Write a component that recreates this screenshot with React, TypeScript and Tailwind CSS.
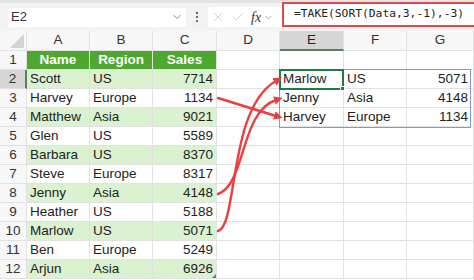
import { Check, ChevronDown, EllipsisVertical, X } from "lucide-react";

const data: [string, string, number][] = [
  ["Scott", "US", 7714],
  ["Harvey", "Europe", 1134],
  ["Matthew", "Asia", 9021],
  ["Glen", "US", 5589],
  ["Barbara", "US", 8370],
  ["Steve", "Europe", 8317],
  ["Jenny", "Asia", 4148],
  ["Heather", "US", 5188],
  ["Marlow", "US", 5071],
  ["Ben", "Europe", 5249],
  ["Arjun", "Asia", 6926],
];

// result of =TAKE(SORT(Data,3,-1),-3)
const spill: [string, string, number][] = [
  ["Marlow", "US", 5071],
  ["Jenny", "Asia", 4148],
  ["Harvey", "Europe", 1134],
];

const cols = ["A", "B", "C", "D", "E", "F", "G"];
const cell = "border-r border-b border-[#e1e1e1] flex items-center overflow-hidden whitespace-nowrap";

function TableCells({ row, idx }: { row: [string, string, number]; idx: number }) {
  const band = idx % 2 === 0 ? "bg-[#daf2d0] border-[#cfe6c5]" : "bg-white border-[#d9ead2]";
  const last = idx === data.length - 1;
  return (
    <>
      <div className={`${cell} ${band} pl-[3px]`}>{row[0]}</div>
      <div className={`${cell} ${band} pl-[3px]`}>{row[1]}</div>
      <div className={`${cell} ${band} justify-end pr-[3px] ${last ? "relative" : ""}`}>
        {row[2]}
        {last && (
          <span className="absolute right-0 bottom-0 w-0 h-0 border-l-[4px] border-l-transparent border-b-[4px] border-b-[#5a7bb8]" />
        )}
      </div>
    </>
  );
}

export default function App() {
  return (
    <div
      className="relative w-[474px] h-[280px] overflow-hidden bg-white text-[13.5px] text-[#222]"
      style={{ fontFamily: '"Liberation Sans", Arial, sans-serif' }}
    >
      {/* formula bar */}
      <div className="h-[31px] bg-[#f3f3f3] border-t-[3px] border-[#e4e4e4] flex items-center">
        <div className="ml-[8px] w-[178px] h-[19px] bg-white rounded-[3px] flex items-center justify-between pl-[3px] pr-[3px] text-[13px] text-[#333]">
          E2
          <ChevronDown size={12} strokeWidth={1.5} className="text-[#555]" />
        </div>
        <EllipsisVertical size={14} strokeWidth={2} className="ml-[4px] text-[#666]" />
        <div className="ml-[4px] w-[74px] h-[20px] bg-white rounded-l-[3px] flex items-center pl-[3px] gap-[6px] text-[#bbb]">
          <X size={14} strokeWidth={1.2} />
          <Check size={14} strokeWidth={1.2} />
          <span
            className="text-[#333] italic text-[14px]"
            style={{ fontFamily: '"Liberation Serif", serif' }}
          >
            fx
          </span>
          <ChevronDown size={11} strokeWidth={1.5} className="-ml-[4px] text-[#888]" />
        </div>
        <div
          className="self-start -mt-[1px] flex-1 h-[25px] bg-white border-2 border-r-0 border-[#e0474c] flex items-center pl-[10px] text-[11.3px] text-[#222]"
          style={{ fontFamily: '"DejaVu Sans Mono", monospace' }}
        >
          =TAKE(SORT(Data,3,-1),-3)
        </div>
      </div>

      {/* sheet grid */}
      <div className="grid grid-cols-[27px_63px_63px_64px_63px_64px_63px_1fr] grid-rows-[20px_repeat(12,19px)]">
        <div className="border-r border-b border-[#e1e1e1] bg-[#f7f7f7] relative">
          <svg className="absolute right-[2px] bottom-[2px]" width="14" height="14">
            <polygon points="14,0 14,14 0,14" fill="#d4d4d4" />
          </svg>
        </div>
        {cols.map((c) => (
          <div
            key={c}
            className={`${cell} justify-center ${
              c === "E" ? "bg-[#d6d6d6] border-b-2 border-b-[#5b7f63] text-[#222]" : "bg-[#f7f7f7] text-[#333]"
            }`}
          >
            {c}
          </div>
        ))}

        {/* row 1 : table header */}
        <div className={`${cell} justify-center bg-[#f7f7f7] text-[#333]`}>1</div>
        {["Name", "Region", "Sales"].map((h) => (
          <div key={h} className={`${cell} justify-center bg-[#4ea72e] border-[#72bb57] text-white font-bold`}>
            {h}
          </div>
        ))}
        <div className={cell} />
        <div className={cell} />
        <div className={cell} />
        <div className={cell} />

        {data.map((row, i) => {
          const r = i + 2;
          const s = spill[i];
          return (
            <div key={r} className="contents">
              <div
                className={`${cell} justify-center ${
                  r === 2 ? "bg-[#d6d6d6] border-r-2 border-r-[#5b7f63]" : "bg-[#f7f7f7]"
                } text-[#333]`}
              >
                {r}
              </div>
              <TableCells row={row} idx={i} />
              <div className={cell} />
              {s ? (
                <>
                  <div className={`${cell} pl-[3px]`}>{s[0]}</div>
                  <div className={`${cell} pl-[3px]`}>{s[1]}</div>
                  <div className={`${cell} justify-end pr-[5px]`}>{s[2]}</div>
                </>
              ) : (
                <>
                  <div className={cell} />
                  <div className={cell} />
                  <div className={cell} />
                </>
              )}
            </div>
          );
        })}
      </div>

      {/* spill range outline + active cell */}
      <div className="absolute left-[279px] top-[69px] w-[192px] h-[59px] border border-[#7f9bd3] pointer-events-none" />
      <div className="absolute left-[279px] top-[69px] w-[65px] h-[21px] border-2 border-[#1f7a45] pointer-events-none">
        <span className="absolute -right-[3px] -bottom-[3px] w-[5px] h-[5px] bg-[#1f7a45] border border-white" />
      </div>

      {/* arrows */}
      <svg className="absolute left-0 top-0 pointer-events-none" width="474" height="280">
        <defs>
          <marker id="ah" viewBox="0 0 10 10" refX="2" refY="5" markerWidth="3.6" markerHeight="3.6" orient="auto">
            <path d="M0,0 L10,5 L0,10 z" fill="#ec3f3f" />
          </marker>
        </defs>
        <g stroke="#ec3f3f" strokeWidth="2.4" fill="none" strokeLinecap="round">
          <path d="M218 98 L276 116" markerEnd="url(#ah)" />
          <path d="M218 194 C246 184, 240 112, 276 100" markerEnd="url(#ah)" />
          <path d="M218 231 C238 226, 228 108, 276 81" markerEnd="url(#ah)" />
        </g>
      </svg>
    </div>
  );
}
